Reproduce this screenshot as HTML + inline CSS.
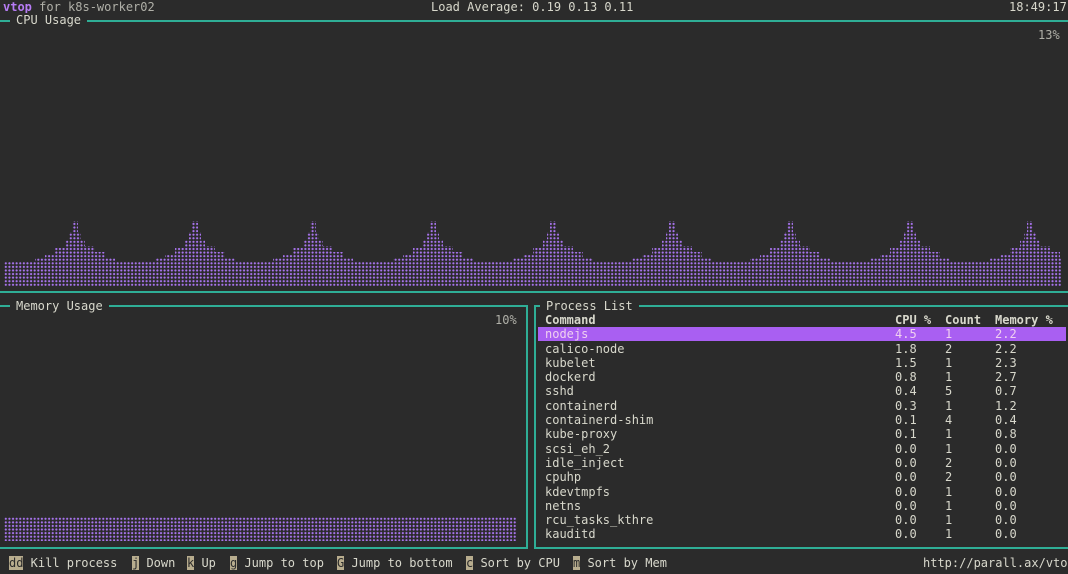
<!DOCTYPE html>
<html><head><meta charset="utf-8"><style>
body{margin:0;width:1068px;height:574px;background:#2b2b2b;overflow:hidden;position:relative;font-family:"DejaVu Sans Mono","Liberation Mono",monospace;font-size:12px;color:#d8d8cc}
.a{position:absolute;white-space:pre;line-height:14px}
.ln{position:absolute;background:#2fae96}
.dots{position:absolute;background-image:radial-gradient(circle,#a874ee 0.9px,transparent 1.3px);background-size:3.61px 3.58px}
.k{background:#b8ad8e;color:#2b2b2b}
.dim{color:#b0b0a8}
.hl{position:absolute;left:538px;top:327px;width:528px;height:14px;background:#a95ff2}
</style></head><body>
<div class="a" style="left:3px;top:0"><b style="color:#b77cf5">vtop</b><span class="dim"> for k8s-worker02</span></div>
<div class="a" style="left:431px;top:0">Load Average: 0.19 0.13 0.11</div>
<div class="a" style="left:1009px;top:0">18:49:17</div>

<div class="ln" style="left:0;top:20px;width:1068px;height:2px"></div>
<div class="a" style="left:10px;top:13px;background:#2b2b2b;padding:0 6px">CPU Usage</div>
<div class="a dim" style="left:1038px;top:28px">13%</div>
<div class="dots" style="left:4px;top:215px;width:1057px;height:71px"></div>
<svg style="position:absolute;left:0;top:0" width="1068" height="300">
<defs><path id="p" fill="#2b2b2b" d="M-60,210 H60 V262 H40 V258 H30 V252 H20 V246 H10 V240 H6 V232 H3 V221 H-3 V232 H-6 V240 H-10 V248 H-20 V255 H-30 V258 H-40 V262 H-60 Z"/></defs>
<use href="#p" x="-45"/><use href="#p" x="75"/><use href="#p" x="195"/><use href="#p" x="313"/><use href="#p" x="433"/><use href="#p" x="553"/><use href="#p" x="672"/><use href="#p" x="790"/><use href="#p" x="910"/><use href="#p" x="1030"/><use href="#p" x="1150"/>
</svg>
<div class="ln" style="left:0;top:291px;width:1068px;height:2px"></div>

<div class="ln" style="left:0;top:305px;width:528px;height:2px"></div>
<div class="ln" style="left:526px;top:305px;width:2px;height:244px"></div>
<div class="ln" style="left:0;top:547px;width:528px;height:2px"></div>
<div class="a" style="left:10px;top:299px;background:#2b2b2b;padding:0 6px">Memory Usage</div>
<div class="a dim" style="left:495px;top:313px">10%</div>
<div class="dots" style="left:4px;top:517px;width:513px;height:24px"></div>

<div class="ln" style="left:534px;top:305px;width:534px;height:2px"></div>
<div class="ln" style="left:534px;top:305px;width:2px;height:244px"></div>
<div class="ln" style="left:534px;top:547px;width:534px;height:2px"></div>
<div class="a" style="left:546px;top:299px;background:#2b2b2b;padding:0 6px 0 6px;margin-left:-6px">Process List</div>
<div class="hl"></div>
<div class="a" style="left:545px;top:313px;line-height:14.3px"><b>Command</b>
<span style="color:#f0d0f0">nodejs</span>
calico-node
kubelet
dockerd
sshd
containerd
containerd-shim
kube-proxy
scsi_eh_2
idle_inject
cpuhp
kdevtmpfs
netns
rcu_tasks_kthre
kauditd</div>
<div class="a" style="left:895px;top:313px;line-height:14.3px"><b>CPU %</b>
<span style="color:#f0d0f0">4.5</span>
1.8
1.5
0.8
0.4
0.3
0.1
0.1
0.0
0.0
0.0
0.0
0.0
0.0
0.0</div>
<div class="a" style="left:945px;top:313px;line-height:14.3px"><b>Count</b>
<span style="color:#f0d0f0">1</span>
2
1
1
5
1
4
1
1
2
2
1
1
1
1</div>
<div class="a" style="left:995px;top:313px;line-height:14.3px"><b>Memory %</b>
<span style="color:#f0d0f0">2.2</span>
2.2
2.3
2.7
0.7
1.2
0.4
0.8
0.0
0.0
0.0
0.0
0.0
0.0
0.0</div>

<div class="a" style="left:9px;top:556px"><span class="k">dd</span> Kill process</div>
<div class="a" style="left:132px;top:556px"><span class="k">j</span> Down</div>
<div class="a" style="left:187px;top:556px"><span class="k">k</span> Up</div>
<div class="a" style="left:230px;top:556px"><span class="k">g</span> Jump to top</div>
<div class="a" style="left:337px;top:556px"><span class="k">G</span> Jump to bottom</div>
<div class="a" style="left:466px;top:556px"><span class="k">c</span> Sort by CPU</div>
<div class="a" style="left:573px;top:556px"><span class="k">m</span> Sort by Mem</div>
<div class="a" style="left:923px;top:556px">http://parall.ax/vtop</div>
</body></html>
